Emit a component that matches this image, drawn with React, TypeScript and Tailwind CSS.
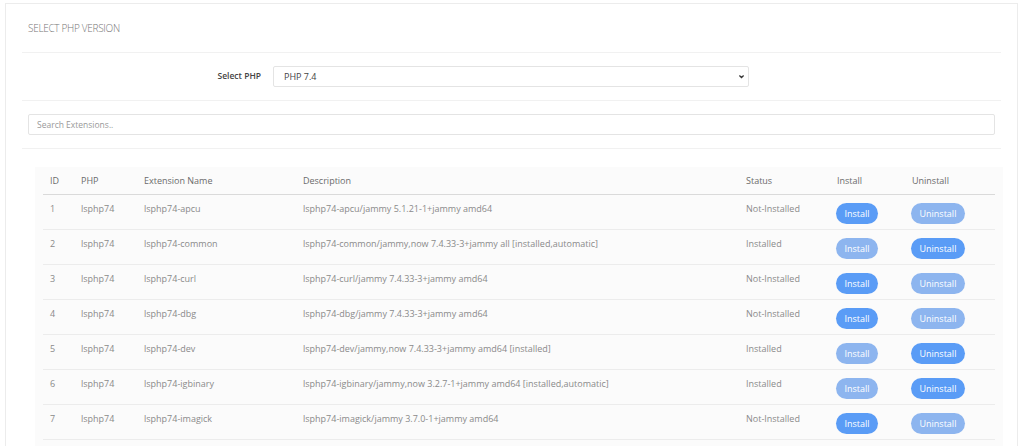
import React from "react";

const rows = [
  { id: 1, name: "lsphp74-apcu", desc: "lsphp74-apcu/jammy 5.1.21-1+jammy amd64", installed: false },
  { id: 2, name: "lsphp74-common", desc: "lsphp74-common/jammy,now 7.4.33-3+jammy all [installed,automatic]", installed: true },
  { id: 3, name: "lsphp74-curl", desc: "lsphp74-curl/jammy 7.4.33-3+jammy amd64", installed: false },
  { id: 4, name: "lsphp74-dbg", desc: "lsphp74-dbg/jammy 7.4.33-3+jammy amd64", installed: false },
  { id: 5, name: "lsphp74-dev", desc: "lsphp74-dev/jammy,now 7.4.33-3+jammy amd64 [installed]", installed: true },
  { id: 6, name: "lsphp74-igbinary", desc: "lsphp74-igbinary/jammy,now 3.2.7-1+jammy amd64 [installed,automatic]", installed: true },
  { id: 7, name: "lsphp74-imagick", desc: "lsphp74-imagick/jammy 3.7.0-1+jammy amd64", installed: false },
];

const cols = "grid grid-cols-[31px_63px_159px_443px_91px_75px_90px]";

function Btn({ label, active }: { label: string; active: boolean }) {
  return (
    <button
      className={
        "h-[21px] rounded-full px-[8.5px] text-[9px] text-white leading-none " +
        (active ? "bg-[#5a9cf6]" : "bg-[#8db5ef]")
      }
    >
      {label}
    </button>
  );
}

export default function App() {
  return (
    <div
      className="h-screen overflow-hidden bg-white pt-[3px] pl-[5px]"
      style={{ fontFamily: '"Open Sans", "Liberation Sans", sans-serif' }}
    >
      <div className="w-[1013px] h-[500px] border border-[#ececec] px-[16px]">
        <div className="h-[48px] flex items-center pl-[6px] text-[10px] font-light text-[#777] tracking-[-0.3px]">
          SELECT PHP VERSION
        </div>
        <div className="h-px bg-[#f1f1f1]" />
        <div className="h-[47px] flex items-center">
          <div className="w-[239px] text-right text-[8.5px] font-semibold text-[#444]">Select PHP</div>
          <div className="relative ml-[12px] w-[476px] h-[21px]">
            <select className="block appearance-none w-full h-full border border-[#e4e4e4] rounded-[2px] bg-white pl-[10px] text-[9px] text-[#444] outline-none">
              <option>PHP 7.4</option>
            </select>
            <svg
              className="absolute right-[4px] top-[7px] pointer-events-none"
              width="7"
              height="7"
              viewBox="0 0 10 10"
            >
              <path d="M2 3.5 L5 6.5 L8 3.5" fill="none" stroke="#333" strokeWidth="1.8" />
            </svg>
          </div>
        </div>
        <div className="h-px bg-[#f1f1f1]" />
        <div className="h-[47px] flex items-center">
          <input
            className="block ml-[6px] w-[967px] h-[21px] border border-[#e4e4e4] rounded-[2px] pl-[8px] text-[8.5px] text-[#444] outline-none placeholder:text-[#999]"
            placeholder="Search Extensions.."
          />
        </div>
        <div className="h-px bg-[#f1f1f1]" />
        <div className="mt-[18px] ml-[13px] w-[968px] bg-[#fbfbfb] px-[8px] pb-[30px]">
          <div className={cols + " h-[28px] items-start pt-[8px] border-b border-[#dadada] text-[9px] leading-[12px] text-[#6b6b6b]"}>
            <div className="pl-[7px]">ID</div>
            <div className="pl-[7px]">PHP</div>
            <div className="pl-[7px]">Extension Name</div>
            <div className="pl-[7px]">Description</div>
            <div className="pl-[7px]">Status</div>
            <div className="pl-[7px]">Install</div>
            <div className="pl-[7px]">Uninstall</div>
          </div>
          {rows.map((r) => (
            <div
              key={r.id}
              className={cols + " h-[35px] items-start pt-[8px] border-b border-[#ececec] text-[9px] text-[#8a8a8a]"}
            >
              <div className="pl-[7px] leading-[12px]">{r.id}</div>
              <div className="pl-[7px] leading-[12px]">lsphp74</div>
              <div className="pl-[7px] leading-[12px]">{r.name}</div>
              <div className="pl-[7px] leading-[12px] whitespace-nowrap">{r.desc}</div>
              <div className="pl-[7px] leading-[12px]">{r.installed ? "Installed" : "Not-Installed"}</div>
              <div className="pl-[6px]">
                <Btn label="Install" active={!r.installed} />
              </div>
              <div className="pl-[6px]">
                <Btn label="Uninstall" active={r.installed} />
              </div>
            </div>
          ))}
        </div>
      </div>
    </div>
  );
}
